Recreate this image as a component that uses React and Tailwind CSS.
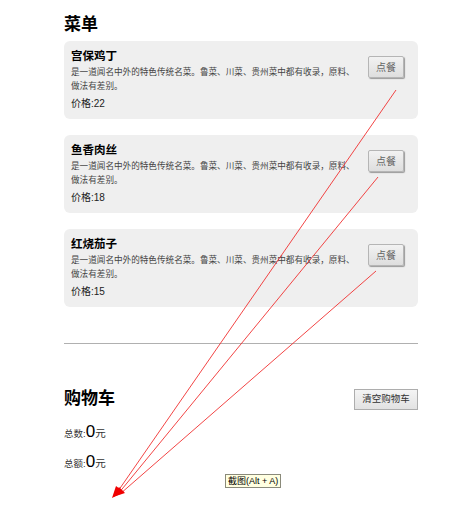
import React from 'react';

const DESC = '是一道闻名中外的特色传统名菜。鲁菜、川菜、贵州菜中都有收录，原料、做法有差别。';

const MENU = [
  { name: '宫保鸡丁', price: 22 },
  { name: '鱼香肉丝', price: 18 },
  { name: '红烧茄子', price: 15 },
];

function Dish({ dish }) {
  return (
    <div className="flex h-[78px] items-start justify-between rounded-md bg-[#efefef] pl-[7px] pr-[14px] pt-[7px]">
      <div className="w-[288px]">
        <h3 className="text-[11.5px] font-bold leading-[16px] text-black">{dish.name}</h3>
        <p className="mt-[1px] text-[8.6px] leading-[14px] text-[#444]">{DESC}</p>
        <p className="mt-[3.5px] text-[10px] leading-[14px] text-[#222]">价格:{dish.price}</p>
      </div>
      <button className="mt-[8px] h-[22px] w-[36px] rounded-[2px] border border-[#b5b5b5] bg-gradient-to-b from-[#f2f2f2] to-[#dedede] text-[10px] text-[#666] shadow-[1px_1px_1px_#999]">
        点餐
      </button>
    </div>
  );
}

function Arrows() {
  return (
    <svg className="pointer-events-none absolute left-0 top-0" width="474" height="532" viewBox="0 0 474 532">
      <g stroke="#f03030" strokeWidth="0.9" fill="none">
        <line x1="396" y1="90" x2="116" y2="494" />
        <line x1="378" y1="177" x2="118" y2="494" />
        <line x1="376" y1="271" x2="120" y2="494" />
      </g>
      <polygon points="112,498 116,486 124,492" fill="#f00000" />
      <polygon points="113,497 119,487 125,493" fill="#f00000" />
    </svg>
  );
}

function Total({ label, className }) {
  return (
    <div className={`flex h-[24px] items-baseline leading-[24px] text-[#333] ${className}`}>
      <span className="text-[9.5px]">{label}:</span>
      <span className="text-[17px] text-black">0</span>
      <span className="text-[10.5px]">元</span>
    </div>
  );
}

export default function App() {
  return (
    <div
      className="relative h-[532px] w-[474px] overflow-hidden bg-white"
      style={{ fontFamily: '"Liberation Sans", "Noto Sans CJK SC", sans-serif' }}
    >
      <div className="ml-[64px] w-[354px] pt-[13px]">
        <h2 className="text-[17px] font-bold leading-[24px] text-black">菜单</h2>
        <div className="mt-[4px] flex flex-col gap-[16px]">
          {MENU.map((d) => (
            <Dish key={d.name} dish={d} />
          ))}
        </div>

        <hr className="mt-[36px] border-t border-[#b0b0b0]" />

        <div className="mt-[43px] flex h-[24px] items-center justify-between">
          <h2 className="text-[17px] font-bold leading-[24px] text-black">购物车</h2>
          <button className="h-[21px] w-[64px] border border-[#adadad] bg-gradient-to-b from-[#f4f4f4] to-[#e2e2e2] text-[9.5px] text-[#333]">
            清空购物车
          </button>
        </div>
        <Total label="总数" className="mt-[9px]" />
        <Total label="总额" className="mt-[6px]" />
      </div>

      <Arrows />

      <div className="absolute left-[225px] top-[474px] border border-[#8a8a7a] bg-[#ffffe1] px-[2px] text-[9px] leading-[12px] text-black">
        截图(Alt + A)
      </div>
    </div>
  );
}
